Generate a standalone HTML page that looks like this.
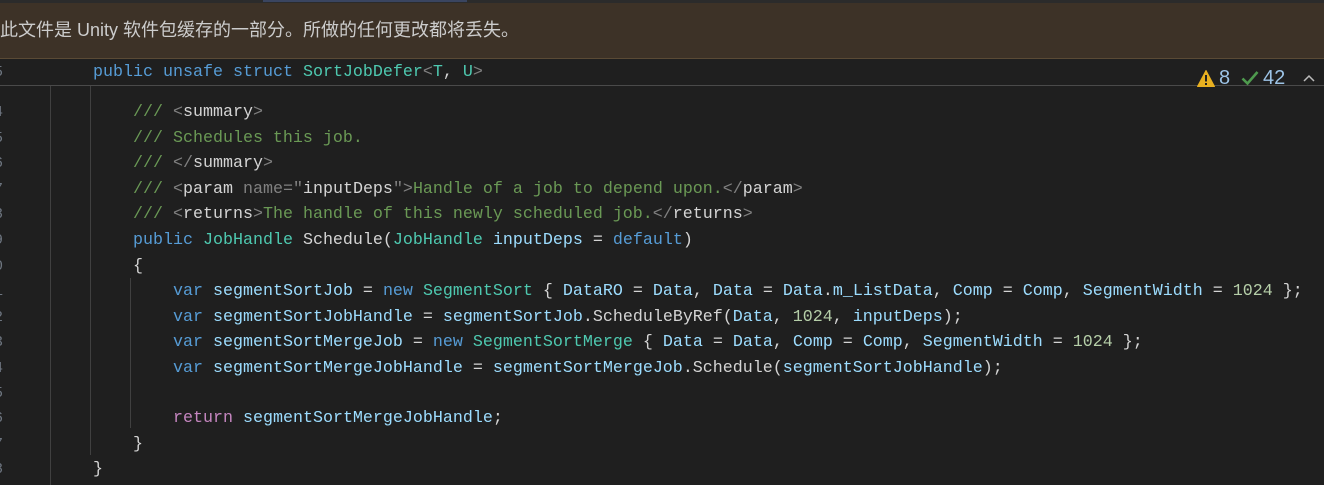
<!DOCTYPE html>
<html><head><meta charset="utf-8"><style>
body{margin:0;width:1324px;height:485px;background:#1f1f1f;overflow:hidden;position:relative;font-family:"Liberation Mono",monospace}
.top{position:absolute;left:0;top:0;width:1324px;height:3px;background:#2b2b2b}
.top i{position:absolute;left:263px;width:204px;top:0;height:2px;background:#3a4560}
.ban{position:absolute;left:0;top:3px;width:1324px;height:55px;background:#3d3227;color:#cccccc;font:18px "Liberation Sans","Noto Sans CJK SC",sans-serif;line-height:54px;border-bottom:1px solid #5a4a35}
.ln{position:absolute;left:0;height:25.5px;line-height:25.5px;font-size:16.67px;white-space:pre;color:#d4d4d4}
.num{position:absolute;left:-6px;color:#6e7681;font-size:15px;height:25.5px;line-height:25.5px}
.sticky{position:absolute;left:0;top:59px;width:1324px;height:26px;background:#1f1f1f;border-bottom:1px solid #4a4a4a;z-index:2}
.g{position:absolute;width:1px;background:#404040}
.k{color:#569cd6}.t{color:#4ec9b0}.c{color:#6a9955}.x{color:#808080}.s{color:#ce9178}.n{color:#b5cea8}.v{color:#9cdcfe}.r{color:#c586c0}.f{color:#dcdcaa}
.st{position:absolute;left:1174px;top:67px;font:20px "Liberation Sans",sans-serif;color:#9cc3e6;z-index:3;width:150px;height:26px}
#c{position:absolute;left:0;top:2px;width:1324px;height:483px}
</style></head><body>
<div class="top"><i></i></div>
<div class="ban">此文件是 Unity 软件包缓存的一部分。所做的任何更改都将丢失。</div>
<div class="sticky">
<div class="num" style="top:1px">5</div>
<div class="ln" style="left:93px;top:1px"><span class="k">public</span> <span class="k">unsafe</span> <span class="k">struct</span> <span class="t">SortJobDefer</span><span class="x">&lt;</span><span class="t">T</span>, <span class="t">U</span><span class="x">&gt;</span></div>
</div>
<div class="st">
<svg style="position:absolute;left:23px;top:3px" width="18" height="17" viewBox="0 0 18 17"><path d="M9 0.5 L17.5 16.5 H0.5 Z" fill="#e8b020" stroke="#e8b020" stroke-linejoin="round"/><rect x="8" y="5" width="2" height="6.5" fill="#1f1f1f"/><rect x="8" y="13" width="2" height="2" fill="#1f1f1f"/></svg>
<span style="position:absolute;left:45px;top:0">8</span>
<svg style="position:absolute;left:67px;top:3px" width="18" height="16" viewBox="0 0 18 16"><path d="M1.5 8.5 L6.5 13.5 L16.5 2" fill="none" stroke="#4e9a4e" stroke-width="2.6"/></svg>
<span style="position:absolute;left:89px;top:0">42</span>
<svg style="position:absolute;left:129px;top:7px" width="12" height="8" viewBox="0 0 12 8"><path d="M1 7 L6 2 L11 7" fill="none" stroke="#bbb" stroke-width="1.5"/></svg>
</div>
<div class="g" style="left:50px;top:85px;height:400px"></div>
<div class="g" style="left:90px;top:85px;height:370px"></div>
<div class="g" style="left:130px;top:278px;height:150px"></div>
<div id="c">
<div class="num" style="top:98px">4</div>
<div class="num" style="top:124px">5</div>
<div class="num" style="top:149px">6</div>
<div class="num" style="top:175px">7</div>
<div class="num" style="top:200px">8</div>
<div class="num" style="top:226px">9</div>
<div class="num" style="top:252px">0</div>
<div class="num" style="top:277px">1</div>
<div class="num" style="top:303px">2</div>
<div class="num" style="top:328px">3</div>
<div class="num" style="top:354px">4</div>
<div class="num" style="top:379px">5</div>
<div class="num" style="top:404px">6</div>
<div class="num" style="top:430px">7</div>
<div class="num" style="top:455px">8</div>
<div class="ln" style="left:133px;top:98px"><span class="c">///</span> <span class="x">&lt;</span><span style="color:#d4d4d4">summary</span><span class="x">&gt;</span></div>
<div class="ln" style="left:133px;top:124px"><span class="c">/// Schedules this job.</span></div>
<div class="ln" style="left:133px;top:149px"><span class="c">///</span> <span class="x">&lt;/</span>summary<span class="x">&gt;</span></div>
<div class="ln" style="left:133px;top:175px"><span class="c">///</span> <span class="x">&lt;</span>param <span class="x">name=</span><span class="x">"</span>inputDeps<span class="x">"&gt;</span><span class="c">Handle of a job to depend upon.</span><span class="x">&lt;/</span>param<span class="x">&gt;</span></div>
<div class="ln" style="left:133px;top:200px"><span class="c">///</span> <span class="x">&lt;</span>returns<span class="x">&gt;</span><span class="c">The handle of this newly scheduled job.</span><span class="x">&lt;/</span>returns<span class="x">&gt;</span></div>
<div class="ln" style="left:133px;top:226px"><span class="k">public</span> <span class="t">JobHandle</span> Schedule(<span class="t">JobHandle</span> <span class="v">inputDeps</span> = <span class="k">default</span>)</div>
<div class="ln" style="left:133px;top:252px">{</div>
<div class="ln" style="left:173px;top:277px"><span class="k">var</span> <span class="v">segmentSortJob</span> = <span class="k">new</span> <span class="t">SegmentSort</span> { <span class="v">DataRO</span> = <span class="v">Data</span>, <span class="v">Data</span> = <span class="v">Data</span>.<span class="v">m_ListData</span>, <span class="v">Comp</span> = <span class="v">Comp</span>, <span class="v">SegmentWidth</span> = <span class="n">1024</span> };</div>
<div class="ln" style="left:173px;top:303px"><span class="k">var</span> <span class="v">segmentSortJobHandle</span> = <span class="v">segmentSortJob</span>.ScheduleByRef(<span class="v">Data</span>, <span class="n">1024</span>, <span class="v">inputDeps</span>);</div>
<div class="ln" style="left:173px;top:328px"><span class="k">var</span> <span class="v">segmentSortMergeJob</span> = <span class="k">new</span> <span class="t">SegmentSortMerge</span> { <span class="v">Data</span> = <span class="v">Data</span>, <span class="v">Comp</span> = <span class="v">Comp</span>, <span class="v">SegmentWidth</span> = <span class="n">1024</span> };</div>
<div class="ln" style="left:173px;top:354px"><span class="k">var</span> <span class="v">segmentSortMergeJobHandle</span> = <span class="v">segmentSortMergeJob</span>.Schedule(<span class="v">segmentSortJobHandle</span>);</div>
<div class="ln" style="left:173px;top:404px"><span class="r">return</span> <span class="v">segmentSortMergeJobHandle</span>;</div>
<div class="ln" style="left:133px;top:430px">}</div>
<div class="ln" style="left:93px;top:455px">}</div>
</div>
</body></html>
